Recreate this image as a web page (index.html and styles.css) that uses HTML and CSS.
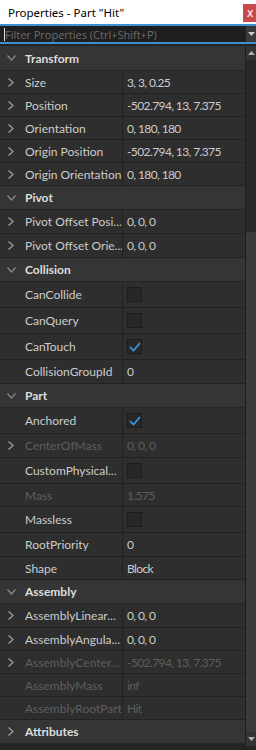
FILE: index.html
```html
<!DOCTYPE html>
<html lang="en">
<head>
    <meta charset="UTF-8">
    <title>Properties - Part "Hit"</title>
    <link rel="stylesheet" href="styles.css">
</head>
<body>

    <div class="titlebar">
        <span class="title">Properties - Part "Hit"</span>
        <span class="close">x</span>
    </div>

    <div class="filter">
        <span class="caret"></span>
        <span class="filter-text">Filter Properties (Ctrl+Shift+P)</span>
        <span class="filter-drop"><svg width="7" height="4" viewBox="0 0 7 4"><path d="M0 0h7L3.5 4z" fill="#c8c8c8"/></svg></span>
    </div>

    <div class="panel">
        <div class="list">
            <div class="section first"><span class="arrow"><svg width="9" height="6" viewBox="0 0 9 6"><path d="M0.5 0.5L4.5 5L8.5 0.5" fill="none" stroke="#8a8a8a" stroke-width="1.2"/></svg></span>Transform</div>
            <div class="row short"><span class="name"><span class="arrow"><svg width="6" height="9" viewBox="0 0 6 9"><path d="M0.5 0.5L5 4.5L0.5 8.5" fill="none" stroke="#a0a0a0" stroke-width="1.2"/></svg></span>Size</span><span class="value">3, 3, 0.25</span></div>
            <div class="row short"><span class="name"><span class="arrow"><svg width="6" height="9" viewBox="0 0 6 9"><path d="M0.5 0.5L5 4.5L0.5 8.5" fill="none" stroke="#a0a0a0" stroke-width="1.2"/></svg></span>Position</span><span class="value">-502.794, 13, 7.375</span></div>
            <div class="row short"><span class="name"><span class="arrow"><svg width="6" height="9" viewBox="0 0 6 9"><path d="M0.5 0.5L5 4.5L0.5 8.5" fill="none" stroke="#a0a0a0" stroke-width="1.2"/></svg></span>Orientation</span><span class="value">0, 180, 180</span></div>
            <div class="row short"><span class="name"><span class="arrow"><svg width="6" height="9" viewBox="0 0 6 9"><path d="M0.5 0.5L5 4.5L0.5 8.5" fill="none" stroke="#a0a0a0" stroke-width="1.2"/></svg></span>Origin Position</span><span class="value">-502.794, 13, 7.375</span></div>
            <div class="row short"><span class="name"><span class="arrow"><svg width="6" height="9" viewBox="0 0 6 9"><path d="M0.5 0.5L5 4.5L0.5 8.5" fill="none" stroke="#a0a0a0" stroke-width="1.2"/></svg></span>Origin Orientation</span><span class="value">0, 180, 180</span></div>

            <div class="section"><span class="arrow"><svg width="9" height="6" viewBox="0 0 9 6"><path d="M0.5 0.5L4.5 5L8.5 0.5" fill="none" stroke="#8a8a8a" stroke-width="1.2"/></svg></span>Pivot</div>
            <div class="row"><span class="name"><span class="arrow"><svg width="6" height="9" viewBox="0 0 6 9"><path d="M0.5 0.5L5 4.5L0.5 8.5" fill="none" stroke="#a0a0a0" stroke-width="1.2"/></svg></span>Pivot Offset Posi...</span><span class="value">0, 0, 0</span></div>
            <div class="row"><span class="name"><span class="arrow"><svg width="6" height="9" viewBox="0 0 6 9"><path d="M0.5 0.5L5 4.5L0.5 8.5" fill="none" stroke="#a0a0a0" stroke-width="1.2"/></svg></span>Pivot Offset Orie...</span><span class="value">0, 0, 0</span></div>

            <div class="section"><span class="arrow"><svg width="9" height="6" viewBox="0 0 9 6"><path d="M0.5 0.5L4.5 5L8.5 0.5" fill="none" stroke="#8a8a8a" stroke-width="1.2"/></svg></span>Collision</div>
            <div class="row tall"><span class="name"><span class="arrow"></span>CanCollide</span><span class="value"><span class="check"></span></span></div>
            <div class="row tall"><span class="name"><span class="arrow"></span>CanQuery</span><span class="value"><span class="check"></span></span></div>
            <div class="row tall"><span class="name"><span class="arrow"></span>CanTouch</span><span class="value"><span class="check"><svg width="12" height="10" viewBox="0 0 12 10"><path d="M1 5L4.5 8.5L11 1" fill="none" stroke="#3d9be6" stroke-width="1.6"/></svg></span></span></div>
            <div class="row"><span class="name"><span class="arrow"></span>CollisionGroupId</span><span class="value">0</span></div>

            <div class="section"><span class="arrow"><svg width="9" height="6" viewBox="0 0 9 6"><path d="M0.5 0.5L4.5 5L8.5 0.5" fill="none" stroke="#8a8a8a" stroke-width="1.2"/></svg></span>Part</div>
            <div class="row tall"><span class="name"><span class="arrow"></span>Anchored</span><span class="value"><span class="check"><svg width="12" height="10" viewBox="0 0 12 10"><path d="M1 5L4.5 8.5L11 1" fill="none" stroke="#3d9be6" stroke-width="1.6"/></svg></span></span></div>
            <div class="row off"><span class="name"><span class="arrow"><svg width="6" height="9" viewBox="0 0 6 9"><path d="M0.5 0.5L5 4.5L0.5 8.5" fill="none" stroke="#a0a0a0" stroke-width="1.2"/></svg></span>CenterOfMass</span><span class="value">0, 0, 0</span></div>
            <div class="row tall"><span class="name"><span class="arrow"></span>CustomPhysical...</span><span class="value"><span class="check"></span></span></div>
            <div class="row short off"><span class="name"><span class="arrow"></span>Mass</span><span class="value">1.575</span></div>
            <div class="row tall"><span class="name"><span class="arrow"></span>Massless</span><span class="value"><span class="check"></span></span></div>
            <div class="row"><span class="name"><span class="arrow"></span>RootPriority</span><span class="value">0</span></div>
            <div class="row short"><span class="name"><span class="arrow"></span>Shape</span><span class="value">Block</span></div>

            <div class="section"><span class="arrow"><svg width="9" height="6" viewBox="0 0 9 6"><path d="M0.5 0.5L4.5 5L8.5 0.5" fill="none" stroke="#8a8a8a" stroke-width="1.2"/></svg></span>Assembly</div>
            <div class="row"><span class="name"><span class="arrow"><svg width="6" height="9" viewBox="0 0 6 9"><path d="M0.5 0.5L5 4.5L0.5 8.5" fill="none" stroke="#a0a0a0" stroke-width="1.2"/></svg></span>AssemblyLinear...</span><span class="value">0, 0, 0</span></div>
            <div class="row short"><span class="name"><span class="arrow"><svg width="6" height="9" viewBox="0 0 6 9"><path d="M0.5 0.5L5 4.5L0.5 8.5" fill="none" stroke="#a0a0a0" stroke-width="1.2"/></svg></span>AssemblyAngula...</span><span class="value">0, 0, 0</span></div>
            <div class="row short off"><span class="name"><span class="arrow"><svg width="6" height="9" viewBox="0 0 6 9"><path d="M0.5 0.5L5 4.5L0.5 8.5" fill="none" stroke="#a0a0a0" stroke-width="1.2"/></svg></span>AssemblyCenter...</span><span class="value">-502.794, 13, 7.375</span></div>
            <div class="row short off"><span class="name"><span class="arrow"></span>AssemblyMass</span><span class="value">inf</span></div>
            <div class="row short off"><span class="name"><span class="arrow"></span>AssemblyRootPart</span><span class="value">Hit</span></div>

            <div class="section"><span class="arrow"><svg width="6" height="9" viewBox="0 0 6 9"><path d="M0.5 0.5L5 4.5L0.5 8.5" fill="none" stroke="#a0a0a0" stroke-width="1.2"/></svg></span>Attributes</div>
        </div>

        <div class="scrollbar">
            <span class="scroll-btn"><svg width="7" height="4" viewBox="0 0 7 4"><path d="M0 4h7L3.5 0z" fill="#b0b0b0"/></svg></span>
            <span class="scroll-track"><span class="scroll-thumb"></span></span>
            <span class="scroll-btn"><svg width="7" height="4" viewBox="0 0 7 4"><path d="M0 0h7L3.5 4z" fill="#b0b0b0"/></svg></span>
        </div>
    </div>

</body>
</html>
```

FILE: styles.css
```css
body {
    margin: 0;
    background-color: #252525;
    font-family: Lato, "Open Sans", sans-serif;
    font-size: 12px;
    color: #cccccc;
}
.titlebar {
    display: flex;
    justify-content: space-between;
    align-items: center;
    height: 24px;
    background: white;
    color: #000;
    font-family: "Noto Sans", sans-serif;
    font-size: 11.5px;
}
.title {
    padding-left: 8px;
}
.close {
    background-color: #c94a4a;
    color: white;
    width: 9px;
    height: 18px;
    margin-top: 2px;
    padding-left: 4px;
    font-size: 12px;
    line-height: 17px;
}
.filter {
    display: flex;
    align-items: center;
    height: 16px;
    background-color: #1f1f1f;
    border-top: 2px solid #3d8fd1;
    border-bottom: 2px solid #3d8fd1;
}
.caret {
    width: 1px;
    height: 13px;
    margin-left: 4px;
    background: #e0e0e0;
}
.filter-text {
    flex: 1;
    color: #6c6c6c;
    font-family: "Open Sans", sans-serif;
    font-size: 11px;
}
.filter-drop {
    display: flex;
    align-items: center;
    justify-content: center;
    width: 10px;
    height: 16px;
    background: #3a3a3a;
}
.panel {
    display: flex;
    margin-top: 2px;
}
.list {
    flex: 1;
    border-right: 1px solid #1e1e1e;
}
.section {
    display: flex;
    align-items: center;
    box-sizing: border-box;
    height: 24px;
    background-color: #353535;
    border-bottom: 1px solid #262626;
    font-weight: bold;
    color: #dedede;
}
.section.first {
    height: 25px;
}
.row {
    display: grid;
    grid-template-columns: 122px 1fr;
    box-sizing: border-box;
    height: 24px;
    background-color: #2e2e2e;
    border-bottom: 1px solid #222;
}
.row.short {
    height: 23px;
}
.row.tall {
    height: 26px;
}
.name {
    display: flex;
    align-items: center;
    white-space: nowrap;
    overflow: hidden;
}
.arrow {
    display: flex;
    justify-content: center;
    align-items: center;
    width: 22px;
    margin-right: 3px;
    flex: none;
}
.value {
    display: flex;
    align-items: center;
    padding-left: 4px;
    border-left: 1px solid #222;
    letter-spacing: -0.6px;
}
.off {
    color: #5e5e5e;
}
.check {
    display: flex;
    align-items: center;
    justify-content: center;
    width: 13px;
    height: 13px;
    background: #272727;
    border: 1px solid #1c1c1c;
}
.scrollbar {
    display: flex;
    flex-direction: column;
    width: 10px;
    height: 700px;
    background: #292929;
}
.scroll-btn {
    display: flex;
    align-items: center;
    justify-content: center;
    height: 14px;
    background: #333;
}
.scroll-track {
    flex: 1;
    display: flex;
    flex-direction: column;
    justify-content: flex-end;
}
.scroll-thumb {
    height: 500px;
    background: #3a3a3a;
}
```
